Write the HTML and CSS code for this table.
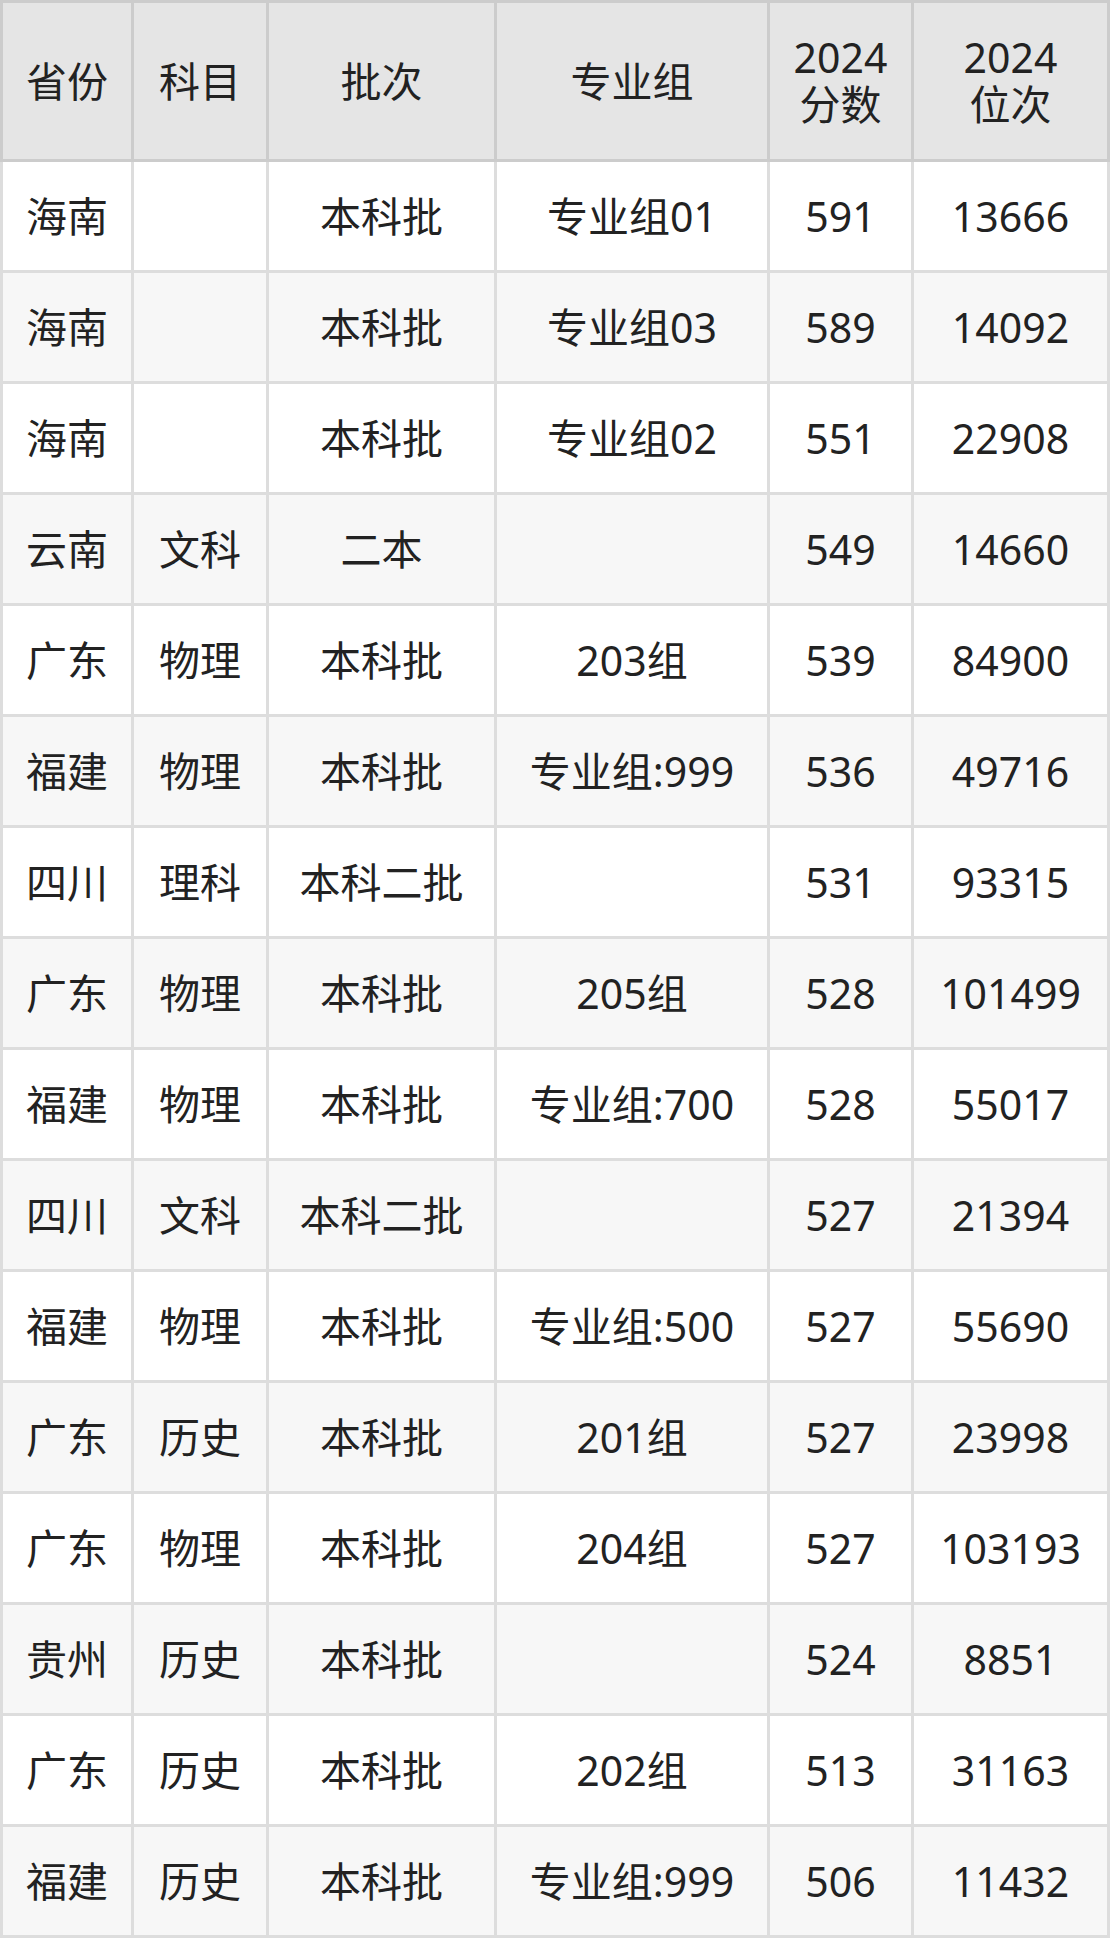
FILE: index.html
```html
<!DOCTYPE html>
<html lang="zh-CN">
<head>
<meta charset="utf-8">
<title>2024 分数 位次</title>
<link rel="stylesheet" href="styles.css">
</head>
<body>
<div class="table">
  <div class="row head">
    <div class="cell">省份</div>
    <div class="cell">科目</div>
    <div class="cell">批次</div>
    <div class="cell">专业组</div>
    <div class="cell two">2024<br>分数</div>
    <div class="cell two">2024<br>位次</div>
  </div>
  <div class="row"><div class="cell">海南</div><div class="cell"></div><div class="cell">本科批</div><div class="cell">专业组01</div><div class="cell">591</div><div class="cell">13666</div></div>
  <div class="row alt"><div class="cell">海南</div><div class="cell"></div><div class="cell">本科批</div><div class="cell">专业组03</div><div class="cell">589</div><div class="cell">14092</div></div>
  <div class="row"><div class="cell">海南</div><div class="cell"></div><div class="cell">本科批</div><div class="cell">专业组02</div><div class="cell">551</div><div class="cell">22908</div></div>
  <div class="row alt"><div class="cell">云南</div><div class="cell">文科</div><div class="cell">二本</div><div class="cell"></div><div class="cell">549</div><div class="cell">14660</div></div>
  <div class="row"><div class="cell">广东</div><div class="cell">物理</div><div class="cell">本科批</div><div class="cell">203组</div><div class="cell">539</div><div class="cell">84900</div></div>
  <div class="row alt"><div class="cell">福建</div><div class="cell">物理</div><div class="cell">本科批</div><div class="cell">专业组:999</div><div class="cell">536</div><div class="cell">49716</div></div>
  <div class="row"><div class="cell">四川</div><div class="cell">理科</div><div class="cell">本科二批</div><div class="cell"></div><div class="cell">531</div><div class="cell">93315</div></div>
  <div class="row alt"><div class="cell">广东</div><div class="cell">物理</div><div class="cell">本科批</div><div class="cell">205组</div><div class="cell">528</div><div class="cell">101499</div></div>
  <div class="row"><div class="cell">福建</div><div class="cell">物理</div><div class="cell">本科批</div><div class="cell">专业组:700</div><div class="cell">528</div><div class="cell">55017</div></div>
  <div class="row alt"><div class="cell">四川</div><div class="cell">文科</div><div class="cell">本科二批</div><div class="cell"></div><div class="cell">527</div><div class="cell">21394</div></div>
  <div class="row"><div class="cell">福建</div><div class="cell">物理</div><div class="cell">本科批</div><div class="cell">专业组:500</div><div class="cell">527</div><div class="cell">55690</div></div>
  <div class="row alt"><div class="cell">广东</div><div class="cell">历史</div><div class="cell">本科批</div><div class="cell">201组</div><div class="cell">527</div><div class="cell">23998</div></div>
  <div class="row"><div class="cell">广东</div><div class="cell">物理</div><div class="cell">本科批</div><div class="cell">204组</div><div class="cell">527</div><div class="cell">103193</div></div>
  <div class="row alt"><div class="cell">贵州</div><div class="cell">历史</div><div class="cell">本科批</div><div class="cell"></div><div class="cell">524</div><div class="cell">8851</div></div>
  <div class="row"><div class="cell">广东</div><div class="cell">历史</div><div class="cell">本科批</div><div class="cell">202组</div><div class="cell">513</div><div class="cell">31163</div></div>
  <div class="row alt"><div class="cell">福建</div><div class="cell">历史</div><div class="cell">本科批</div><div class="cell">专业组:999</div><div class="cell">506</div><div class="cell">11432</div></div>
</div>
</body>
</html>
```
FILE: styles.css
```css
html, body {
  margin: 0;
  padding: 0;
  background: #ffffff;
}

.table {
  width: 1110px;
  font-family: "Noto Sans", "Noto Sans CJK SC", sans-serif;
  font-size: 41px;
  color: #222222;
}

.row {
  display: grid;
  grid-template-columns: 134px 135px 228px 273px 144px 196px;
  height: 111px;
  background: #ffffff;
}

.row.alt {
  background: #f7f7f7;
}

.cell {
  box-sizing: border-box;
  display: flex;
  align-items: center;
  justify-content: center;
  text-align: center;
  white-space: nowrap;
  border-right: 3px solid #dddddd;
  border-bottom: 3px solid #dddddd;
  line-height: 47px;
}

.cell:first-child {
  border-left: 3px solid #dddddd;
}

.head {
  height: 162px;
  background: #e5e5e5;
}

.head .cell {
  border-top: 3px solid #cccccc;
  border-right-color: #cccccc;
  border-bottom-color: #cccccc;
}

.head .cell:first-child {
  border-left-color: #cccccc;
}
```
